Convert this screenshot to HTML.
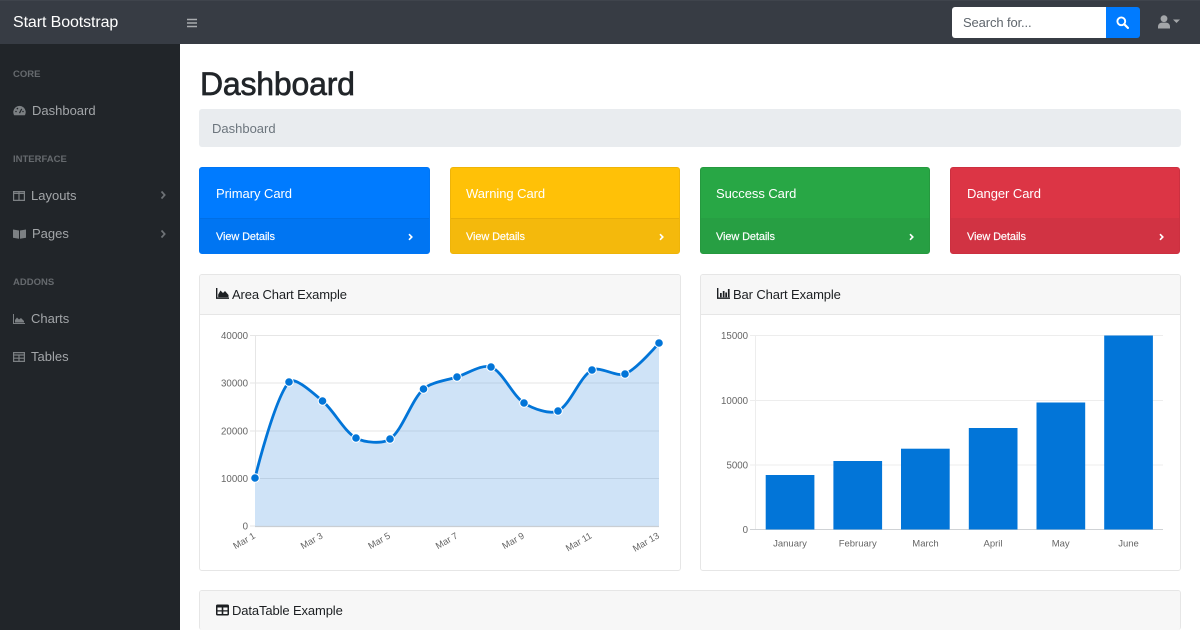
<!DOCTYPE html>
<html lang="en"><head><meta charset="utf-8"><title>Dashboard</title>
<style>
html,body{margin:0;padding:0;width:1200px;height:630px;overflow:hidden;background:#fff;font-family:"Liberation Sans",sans-serif;color:#212529}
#page{position:relative;width:1200px;height:630px;overflow:hidden}
.a{position:absolute;white-space:nowrap;line-height:1}
#nav{position:absolute;left:0;top:0;width:1200px;height:44px;background:#373c44;border-top:1px solid #3f444c;box-sizing:border-box}
#side{position:absolute;left:0;top:44px;width:180px;height:586px;background:#212529}
.head{color:#666a6e;font-size:9.5px;font-weight:bold}
.item{color:#a3a6a9;font-size:13px}
.card{position:absolute;box-sizing:border-box;border-radius:3px;overflow:hidden}
.stat{top:167px;width:230px;height:87px;color:#fff;border:1px solid transparent}
.stat .t{position:absolute;left:16px;top:19px;font-size:13px;line-height:1;white-space:nowrap;letter-spacing:-.05px}
.stat .f{position:absolute;left:-1px;right:-1px;top:50px;bottom:-1px}
.stat .v{position:absolute;left:17px;top:13px;font-size:11px;line-height:1;white-space:nowrap;letter-spacing:-.12px;-webkit-text-stroke:.15px #fff}
.stat svg{position:absolute;left:208px;top:13px}
.box{border:1px solid #e6e6e6}
.hd{position:absolute;left:0;right:0;top:0;height:39px;background:#f7f7f7;border-bottom:1px solid #e6e6e6}
.hd span{position:absolute;left:32px;top:13px;font-size:13px;line-height:1;white-space:nowrap;color:#1c1f22;letter-spacing:-.12px}
svg{display:block}
svg text{font-family:"Liberation Sans",sans-serif}
</style></head><body>
<div id="page">

<div id="nav"></div>
<div class="a" style="left:13px;top:15px;font-size:16px;color:#fff;letter-spacing:-.1px">Start Bootstrap</div>
<svg class="a" style="left:187px;top:18px" width="10" height="10" viewBox="0 0 10 10"><path d="M0 1.500h10M0 5h10M0 8.500h10" stroke="#a9acaf" stroke-width="1.500"/></svg>

<div class="a" style="left:952px;top:7px;width:154px;height:31px;background:#fff;border-radius:3px 0 0 3px"></div>
<div class="a" style="left:963px;top:16px;font-size:13px;color:#5f666d;letter-spacing:-.12px">Search for...</div>
<div class="a" style="left:1106px;top:7px;width:34px;height:31px;background:#007bff;border-radius:0 3px 3px 0"></div>
<svg class="a" style="left:1116px;top:16px" width="13" height="13" viewBox="0 0 13 13"><circle cx="5.300" cy="5.300" r="3.900" fill="none" stroke="#fff" stroke-width="1.900"/><path d="M8.200 8.200l3.700 3.700" stroke="#fff" stroke-width="2.200" stroke-linecap="round"/></svg>
<svg class="a" style="left:1158px;top:15px" width="24" height="14" viewBox="0 0 24 14"><circle cx="6" cy="3.700" r="3.400" fill="#a3a6a9"/><path d="M0 13.500v-1.800C0 9 2 7.600 4 7.600h4c2 0 4 1.400 4 4.100v1.800z" fill="#a3a6a9"/><path d="M15 4.500h7l-3.500 3.500z" fill="#a3a6a9"/></svg>

<div id="side"></div>
<div class="a head" style="left:13px;top:70px">CORE</div>
<svg class="a" style="left:13px;top:105px" width="13" height="11" viewBox="0 0 13 11"><path d="M1.200 10.300A6.200 6.200 0 1 1 11.800 10.300z" fill="#7c8083"/><path d="M6.500 8.200L8.700 3.900" stroke="#212529" stroke-width="1.200"/><circle cx="3" cy="6.500" r=".8" fill="#212529"/><circle cx="4.400" cy="3.600" r=".8" fill="#212529"/><circle cx="10" cy="6.500" r=".8" fill="#212529"/></svg>
<div class="a item" style="left:32px;top:104px">Dashboard</div>

<div class="a head" style="left:13px;top:155px">INTERFACE</div>
<svg class="a" style="left:13px;top:191px" width="12" height="10" viewBox="0 0 12 10"><path d="M.6.600h10.800v8.800H.6zM6 .6v8.800M.6 2.400h10.800" fill="none" stroke="#7c8083" stroke-width="1.200"/></svg>
<div class="a item" style="left:31px;top:189px">Layouts</div>
<svg class="a" style="left:160px;top:190px" width="7" height="10" viewBox="0 0 7 10"><path d="M1.500 1.500l3.200 3.500-3.200 3.500" fill="none" stroke="#6e7276" stroke-width="1.700"/></svg>
<svg class="a" style="left:13px;top:229px" width="13" height="10" viewBox="0 0 13 10"><path d="M0 .5l6 1v8.300l-6-1zM13 .5l-6 1v8.300l6-1z" fill="#7c8083"/></svg>
<div class="a item" style="left:32px;top:227px">Pages</div>
<svg class="a" style="left:160px;top:229px" width="7" height="10" viewBox="0 0 7 10"><path d="M1.500 1.500l3.200 3.500-3.200 3.500" fill="none" stroke="#6e7276" stroke-width="1.700"/></svg>

<div class="a head" style="left:13px;top:278px">ADDONS</div>
<svg class="a" style="left:13px;top:314px" width="12" height="10" viewBox="0 0 12 10"><path d="M.5 0v9.500H12" fill="none" stroke="#7c8083"/><path d="M2 8.500V6l2-2.500 2 2 2-1.500 3 3v1.500z" fill="#7c8083"/></svg>
<div class="a item" style="left:31px;top:312px">Charts</div>
<svg class="a" style="left:13px;top:352px" width="12" height="10" viewBox="0 0 12 10"><path d="M.6.600h10.800v8.800H.6zM.6 3h10.800M.6 6.200h10.800M6 3v6.400" fill="none" stroke="#7c8083" stroke-width="1.200"/></svg>
<div class="a item" style="left:31px;top:350px">Tables</div>

<div class="a" style="left:200px;top:68px;font-size:32px;color:#212529;-webkit-text-stroke:.65px #212529;letter-spacing:-.2px">Dashboard</div>
<div class="a" style="left:199px;top:109px;width:982px;height:38px;background:#e9ecef;border-radius:3px"></div>
<div class="a" style="left:212px;top:122px;font-size:13px;color:#6c757d">Dashboard</div>

<div class="card stat" style="left:199px;width:231px;background:#007bff;border-color:#0076f5">
  <div class="t">Primary Card</div>
  <div class="f" style="background:#0075f2;border-top:1px solid #006fe6"><div class="v">View Details</div><svg width="7" height="10" viewBox="0 0 7 10"><path d="M2 2.200L4.800 5 2 7.800" fill="none" stroke="#fff" stroke-width="1.600"/></svg></div>
</div>
<div class="card stat" style="left:450px;background:#ffc107;border-color:#eeb409">
  <div class="t" style="left:15px">Warning Card</div>
  <div class="f" style="background:#f4b90c;border-top:1px solid #e8ae08"><div class="v" style="left:16px">View Details</div><svg width="7" height="10" viewBox="0 0 7 10"><path d="M2 2.200L4.800 5 2 7.800" fill="none" stroke="#fff" stroke-width="1.600"/></svg></div>
</div>
<div class="card stat" style="left:700px;background:#28a745;border-color:#26993f">
  <div class="t" style="left:15px">Success Card</div>
  <div class="f" style="background:#279f43;border-top:1px solid #279f43"><div class="v" style="left:16px">View Details</div><svg width="7" height="10" viewBox="0 0 7 10"><path d="M2 2.200L4.800 5 2 7.800" fill="none" stroke="#fff" stroke-width="1.600"/></svg></div>
</div>
<div class="card stat" style="left:950px;background:#dc3545;border-color:#cc3040">
  <div class="t">Danger Card</div>
  <div class="f" style="background:#d13343;border-top:1px solid #d13343"><div class="v">View Details</div><svg width="7" height="10" viewBox="0 0 7 10"><path d="M2 2.200L4.800 5 2 7.800" fill="none" stroke="#fff" stroke-width="1.600"/></svg></div>
</div>

<div class="card box" style="left:199px;top:274px;width:482px;height:297px"><div class="hd"><span style="left:32px">Area Chart Example</span></div></div>
<div class="card box" style="left:700px;top:274px;width:481px;height:297px"><div class="hd"><span>Bar Chart Example</span></div></div>
<div class="card box" style="left:199px;top:590px;width:982px;height:40px;border-bottom:0"><div class="hd"><span>DataTable Example</span></div></div>

<svg class="a" style="left:216px;top:288px" width="13" height="11" viewBox="0 0 13 11"><path d="M.7 0v10.200H13" fill="none" stroke="#1c1f22" stroke-width="1.400"/><path d="M2.200 9.200V6.500L4.500 2.500 7 5l2-2 3.500 4v2.200z" fill="#1c1f22"/></svg>
<svg class="a" style="left:717px;top:288px" width="13" height="11" viewBox="0 0 13 11"><path d="M.7 0v10.200H13" fill="none" stroke="#1c1f22" stroke-width="1.400"/><path d="M3 5h1.700v4.200H3zM5.800 3h1.700v6.200H5.800zM8.300 4.500H10v4.700H8.300zM10.900 1h1.700v8.200h-1.700z" fill="#1c1f22"/></svg>
<svg class="a" style="left:216px;top:604px" width="13" height="12" viewBox="0 0 13 12"><rect x="0" y=".5" width="13" height="11" rx="1.500" fill="#1c1f22"/><path d="M1.500 3.500h4.200v2.800H1.500zM7.300 3.500h4.200v2.800H7.300zM1.500 7.500h4.200v2.500H1.500zM7.300 7.500h4.200v2.500H7.300z" fill="#f7f7f7"/></svg>

<svg class="a" style="left:0;top:0;pointer-events:none" width="1200" height="630" viewBox="0 0 1200 630">
  <g stroke="#e6e6e6" stroke-width="1" fill="none">
    <path d="M255 335.500H659M255 383H659M255 431H659M255 478.500H659M250 335.500h5M250 383h5M250 431h5M250 478.500h5M250 526h5M255.500 335V526"/>
  </g>
  <path d="M255 478C255 478 274.300 398.800 289 382C294.600 375.700 313.700 393.700 322.500 401C333.800 410.500 344 431.200 356 438C364.200 442.600 382.700 444.300 390 439C402.900 429.600 410.900 400.700 423.500 389C431 382.100 446.900 380.300 457 377C467.100 373.700 482.600 363.700 491 367C502.700 371.500 512.300 395.300 524 403C532.400 408.500 549.900 414.900 558 411C570.300 405 579.600 376.800 592 370C599.700 365.700 616.600 377.400 625 374C636.700 369.300 659 343 659 343V526H255Z" fill="#cfe3f7"/>
  <path d="M255 431H659M255 478.500H659M255 383H659" stroke="#bcd0e4" stroke-width="1" fill="none" clip-path="url(#c)"/>
  <clipPath id="c"><path d="M255 478C255 478 274.300 398.800 289 382C294.600 375.700 313.700 393.700 322.500 401C333.800 410.500 344 431.200 356 438C364.200 442.600 382.700 444.300 390 439C402.900 429.600 410.900 400.700 423.500 389C431 382.100 446.900 380.300 457 377C467.100 373.700 482.600 363.700 491 367C502.700 371.500 512.300 395.300 524 403C532.400 408.500 549.900 414.900 558 411C570.300 405 579.600 376.800 592 370C599.700 365.700 616.600 377.400 625 374C636.700 369.300 659 343 659 343V526H255Z"/></clipPath>
  <path d="M255 526.500H659" stroke="#c9ced3" stroke-width="1.200"/>
  <path d="M255 478C255 478 274.300 398.800 289 382C294.600 375.700 313.700 393.700 322.500 401C333.800 410.500 344 431.200 356 438C364.200 442.600 382.700 444.300 390 439C402.900 429.600 410.900 400.700 423.500 389C431 382.100 446.900 380.300 457 377C467.100 373.700 482.600 363.700 491 367C502.700 371.500 512.300 395.300 524 403C532.400 408.500 549.900 414.900 558 411C570.300 405 579.600 376.800 592 370C599.700 365.700 616.600 377.400 625 374C636.700 369.300 659 343 659 343" fill="none" stroke="#0275d8" stroke-width="2.800"/>
  <g fill="#0275d8" stroke="#fff" stroke-width="1">
    <circle cx="255" cy="478" r="4.300"/><circle cx="289" cy="382" r="4.300"/><circle cx="322.500" cy="401" r="4.300"/><circle cx="356" cy="438" r="4.300"/><circle cx="390" cy="439" r="4.300"/><circle cx="423.500" cy="389" r="4.300"/><circle cx="457" cy="377" r="4.300"/><circle cx="491" cy="367" r="4.300"/><circle cx="524" cy="403" r="4.300"/><circle cx="558" cy="411" r="4.300"/><circle cx="592" cy="370" r="4.300"/><circle cx="625" cy="374" r="4.300"/><circle cx="659" cy="343" r="4.300"/>
  </g>
  <g font-size="9.700" fill="#666" text-anchor="end">
    <text x="248" y="339">40000</text><text x="248" y="386.500">30000</text><text x="248" y="434.500">20000</text><text x="248" y="482">10000</text><text x="248" y="529.500">0</text>
  </g>
  <g font-size="9.300" fill="#666" text-anchor="end">
    <text transform="translate(256 537.500) rotate(-30)">Mar 1</text>
    <text transform="translate(323.500 537.500) rotate(-30)">Mar 3</text>
    <text transform="translate(391 537.500) rotate(-30)">Mar 5</text>
    <text transform="translate(458.500 537.500) rotate(-30)">Mar 7</text>
    <text transform="translate(525 537.500) rotate(-30)">Mar 9</text>
    <text transform="translate(592.500 537.500) rotate(-30)">Mar 11</text>
    <text transform="translate(660 537.500) rotate(-30)">Mar 13</text>
  </g>

  <g stroke="#ededed" stroke-width="1" fill="none">
    <path d="M750 335.500H1163M750 400.500H1163M750 465H1163M755.500 335V530"/>
  </g>
  <path d="M750 529.500H1163" stroke="#cfd2d5" stroke-width="1"/>
  <g fill="#0275d8">
    <rect x="765.700" y="475" width="48.700" height="54.500"/>
    <rect x="833.400" y="461" width="48.700" height="68.500"/>
    <rect x="901" y="448.700" width="48.700" height="80.800"/>
    <rect x="968.800" y="428" width="48.700" height="101.500"/>
    <rect x="1036.500" y="402.500" width="48.700" height="127"/>
    <rect x="1104.200" y="335.500" width="48.700" height="194"/>
  </g>
  <g font-size="9.700" fill="#666" text-anchor="end">
    <text x="748" y="339">15000</text><text x="748" y="404">10000</text><text x="748" y="468.500">5000</text><text x="748" y="533">0</text>
  </g>
  <g font-size="9.500" fill="#666" text-anchor="middle">
    <text x="790" y="546.500">January</text><text x="857.700" y="546.500">February</text><text x="925.500" y="546.500">March</text><text x="993" y="546.500">April</text><text x="1060.700" y="546.500">May</text><text x="1128.500" y="546.500">June</text>
  </g>
</svg>
</div>
</body></html>
